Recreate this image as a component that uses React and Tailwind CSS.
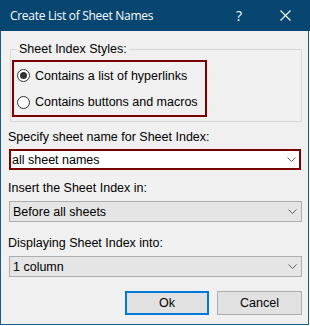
import React from "react";

function Chevron() {
  return (
    <svg width="9" height="5" viewBox="0 0 9 5" className="block">
      <path d="M0.5 0.5 L4.5 4.5 L8.5 0.5" fill="none" stroke="#606060" strokeWidth="1" />
    </svg>
  );
}

function Radio({ checked, label }) {
  return (
    <div className="flex items-center h-[26px] pl-[3px] gap-[5px]">
      <span className="w-[13px] h-[13px] rounded-full border border-[#333333] bg-white flex items-center justify-center">
        {checked && <span className="w-[7px] h-[7px] rounded-full bg-[#333333]" />}
      </span>
      <span className="text-[12.5px] leading-[16px] text-black">{label}</span>
    </div>
  );
}

export default function App() {
  return (
    <div className="w-[310px] h-[326px] bg-white flex flex-col font-['Liberation_Sans',Arial,sans-serif] overflow-hidden">
      <div className="h-[31px] bg-[#074670] flex items-center text-white shrink-0">
        <span className="ml-[10px] text-[12px] font-['Open_Sans','Noto_Sans',sans-serif] tracking-[-0.3px] flex-1">
          Create List of Sheet Names
        </span>
        <span className="text-[14px] font-['Open_Sans','Noto_Sans',sans-serif] mr-[38px]">?</span>
        <svg width="11" height="11" viewBox="0 0 11 11" className="mr-[19px]">
          <path d="M0.5 0.5 L10.5 10.5 M10.5 0.5 L0.5 10.5" stroke="white" strokeWidth="1.1" />
        </svg>
      </div>
      <div className="flex-1 mr-px mb-px border-l border-r border-b border-[#1c5a86] bg-[#f0f0f0] flex flex-col text-black text-[12.5px]">
        <fieldset className="mt-[11px] ml-[9px] w-[292px] border border-[#d9d9d9] pb-[4px]">
          <legend className="ml-[6px] px-[2px] text-[12.5px] leading-[14px]">Sheet Index Styles:</legend>
          <div className="mt-[4px] ml-px w-[195px] h-[57px] border-2 border-[#7b0000] pt-px flex flex-col">
            <Radio checked label="Contains a list of hyperlinks" />
            <div className="mt-px">
              <Radio label="Contains buttons and macros" />
            </div>
          </div>
        </fieldset>

        <div className="mt-[7px] ml-[7px] leading-[16px]">Specify sheet name for Sheet Index:</div>
        <div className="mt-[4px] ml-[8px] w-[292px] h-[21px] border-2 border-[#7b0000] bg-white flex items-center justify-between pl-px pr-[3px]">
          <span className="leading-[16px]">all sheet names</span>
          <Chevron />
        </div>

        <div className="mt-[10px] ml-[7px] leading-[16px]">Insert the Sheet Index in:</div>
        <div className="mt-[5px] ml-[8px] w-[293px] h-[21px] border border-[#adadad] bg-[#e5e5e5] flex items-center justify-between pl-[3px] pr-[4px]">
          <span className="leading-[16px]">Before all sheets</span>
          <Chevron />
        </div>

        <div className="mt-[13px] ml-[7px] leading-[16px]">Displaying Sheet Index into:</div>
        <div className="mt-[5px] ml-[8px] w-[293px] h-[21px] border border-[#adadad] bg-[#e5e5e5] flex items-center justify-between pl-[3px] pr-[4px]">
          <span className="leading-[16px]">1 column</span>
          <Chevron />
        </div>

        <div className="mt-[14px] flex justify-end gap-[8px] pr-[6px]">
          <button className="w-[84px] h-[24px] border-2 border-[#0078d7] bg-[#e1e1e1] text-[12.5px] leading-[16px] flex items-center justify-center">
            Ok
          </button>
          <button className="w-[85px] h-[24px] border border-[#adadad] bg-[#e1e1e1] text-[12.5px] leading-[16px] flex items-center justify-center">
            Cancel
          </button>
        </div>
      </div>
    </div>
  );
}
